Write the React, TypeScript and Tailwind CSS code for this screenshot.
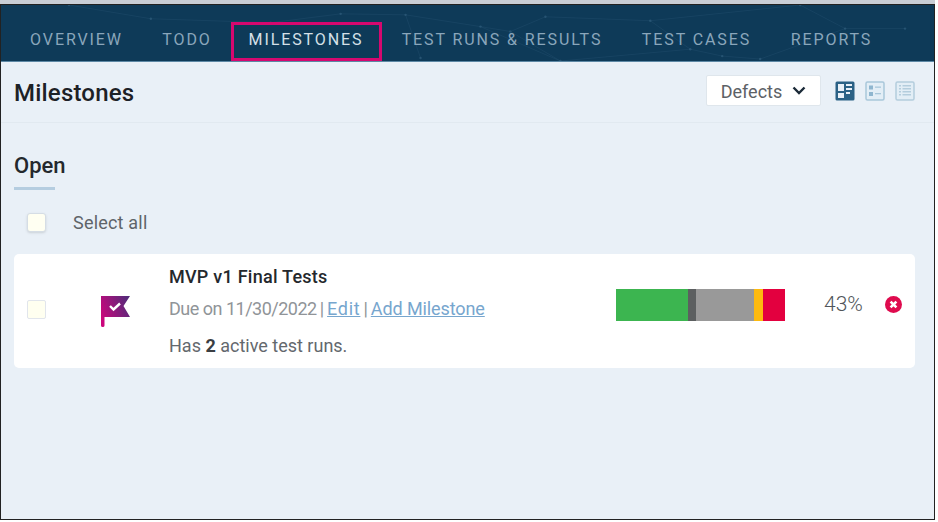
const tabs = [
  { label: "OVERVIEW", w: "w-[133px]", cls: "text-[#8aa6bb] border-transparent" },
  { label: "TODO", w: "w-[88px]", cls: "text-[#8aa6bb] tracking-[1.4px] border-transparent" },
  { label: "MILESTONES", w: "w-[151px]", cls: "text-[#d5e0e8] tracking-[1.7px] border-[#d6086f] pr-[1px]" },
  { label: "TEST RUNS & RESULTS", w: "w-[240px]", cls: "text-[#8aa6bb] border-transparent" },
  { label: "TEST CASES", w: "w-[149px]", cls: "text-[#8aa6bb] border-transparent" },
  { label: "REPORTS", w: "w-[121px]", cls: "text-[#8aa6bb] border-transparent" },
];

function Net() {
  const pts: [number, number][] = [
    [68, 0], [150, 14], [270, 18], [340, 9], [405, 10], [480, 22], [510, 27], [545, 12], [650, 16], [690, 45], [722, 52], [760, 55], [845, 24], [905, 24], [800, 0], [560, 57], [420, 54],
  ];
  const links = [[0, 1], [1, 2], [2, 3], [3, 4], [4, 5], [5, 6], [6, 7], [7, 8], [8, 9], [9, 10], [10, 11], [11, 12], [12, 13], [8, 14], [5, 15], [4, 16], [6, 15], [9, 15], [12, 14]];
  return (
    <svg className="absolute inset-0 w-full h-full" viewBox="0 0 934 57" preserveAspectRatio="none">
      {links.map(([a, b], i) => (
        <line key={i} x1={pts[a][0]} y1={pts[a][1]} x2={pts[b][0]} y2={pts[b][1]} stroke="#2a5676" strokeWidth="0.6" opacity="0.55" />
      ))}
      {pts.map(([x, y], i) => (
        <circle key={i} cx={x} cy={y} r="1.2" fill="#2f5c7c" opacity="0.7" />
      ))}
    </svg>
  );
}

function ViewIcon({ kind }: { kind: 0 | 1 | 2 }) {
  if (kind === 0)
    return (
      <svg width="20" height="20" viewBox="0 0 20 20">
        <rect x="0.5" y="0.5" width="19" height="19" rx="1.5" fill="#2b6185" />
        <rect x="3" y="3" width="6" height="7" fill="#e9f0f7" />
        <rect x="3" y="12" width="6" height="5" fill="#e9f0f7" />
        <rect x="11" y="3" width="6" height="2" fill="#e9f0f7" />
        <rect x="11" y="7" width="6" height="2" fill="#e9f0f7" />
        <rect x="11" y="11" width="4" height="2" fill="#e9f0f7" />
      </svg>
    );
  if (kind === 1)
    return (
      <svg width="20" height="20" viewBox="0 0 20 20">
        <rect x="1" y="1" width="18" height="18" rx="1.5" fill="#e3eef6" stroke="#a9c7da" strokeWidth="1.5" />
        <rect x="4" y="4.5" width="4" height="4" fill="#8fb6cf" />
        <rect x="4" y="11" width="4" height="4" fill="#8fb6cf" />
        <rect x="10" y="5.5" width="6" height="1.3" fill="#a9c7da" />
        <rect x="10" y="12" width="6" height="1.3" fill="#a9c7da" />
      </svg>
    );
  return (
    <svg width="20" height="20" viewBox="0 0 20 20">
      <rect x="1" y="1" width="18" height="18" rx="1.5" fill="#e3eef6" stroke="#b4cddd" strokeWidth="1.5" />
      {[4, 7, 10, 13].map((y) => (
        <g key={y}>
          <rect x="4" y={y} width="2" height="1.5" fill="#b4cddd" />
          <rect x="7.5" y={y} width="8.5" height="1.5" fill="#b4cddd" />
        </g>
      ))}
    </svg>
  );
}

export default function App() {
  return (
    <div className="w-[938px] h-[522px] bg-white overflow-hidden font-['Roboto',sans-serif]">
      <div className="w-[935px] h-[520px] border-t-[4px] border-[#c9ced6]">
        <div className="w-full h-full border border-[#222] bg-[#e9f0f7] flex flex-col">
          <nav className="relative h-[57px] shrink-0 bg-[#0e3a58] flex items-end pl-[9px] border-b border-[#5d88a5]">
            <Net />
            {tabs.map((t) => (
              <div key={t.label} className={`relative ${t.w} h-[39px] flex items-center justify-center pb-[3px] border-[3px] text-[16px] tracking-[1.9px] ${t.cls}`}>
                {t.label}
              </div>
            ))}
          </nav>
          <header className="h-[61px] shrink-0 flex items-center justify-between pl-[13px] pr-[19px] border-b border-[#e1e9f0]">
            <h1 className="text-[24px] tracking-[0.2px] font-medium text-[#1d2126] mt-[1px]">Milestones</h1>
            <div className="flex items-center gap-[14px]">
              <button className="w-[115px] h-[31px] mt-[-4px] bg-white border border-[#dfe6ec] rounded-[2px] flex items-center justify-center gap-[10px] text-[18px] text-[#5c6166]">
                <span className="mt-[2px]">Defects</span>
                <svg width="14" height="9" viewBox="0 0 14 9" fill="none"><path d="M1.5 1.5 7 7l5.5-5.5" stroke="#1b2a38" strokeWidth="2.4" /></svg>
              </button>
              <div className="flex gap-[10px] mt-[-2px]">
                <ViewIcon kind={0} />
                <ViewIcon kind={1} />
                <ViewIcon kind={2} />
              </div>
            </div>
          </header>
          <main className="flex-1 px-[13px] pt-[30px]">
            <h2 className="text-[22px] leading-[26px] font-medium text-[#24282d]">Open</h2>
            <div className="w-[41px] h-[3px] bg-[#b5cde0] mt-[8px]"></div>
            <div className="flex items-center mt-[20px] h-[24px] pl-[13px]">
              <span className="w-[19px] h-[19px] rounded-[3px] bg-[#fffff2] border border-[#d5dde5] shadow-sm"></span>
              <span className="ml-[27px] text-[18px] tracking-[0.2px] text-[#5e6469]">Select all</span>
            </div>
            <section className="mt-[20px] w-[901px] h-[114px] bg-white rounded-[5px] flex items-center pl-[13px]">
              <span className="w-[19px] h-[19px] rounded-[2px] bg-[#fffff0] border-[1.5px] border-[#e1e5ec] mt-[-4px]"></span>
              <svg className="ml-[55px] mt-[0px]" width="29" height="31" viewBox="0 0 29 31">
                <defs>
                  <linearGradient id="flag" x1="0" y1="0.7" x2="1" y2="0.3">
                    <stop offset="0" stopColor="#cc067c" />
                    <stop offset="1" stopColor="#562a7a" />
                  </linearGradient>
                </defs>
                <path d="M0 0h29l-6.5 10L29 21H3.5v8.5a1.75 1.5 0 0 1-3.5 0Z" fill="url(#flag)" />
                <path d="M9 10l3.5 3.5 6.5-6" fill="none" stroke="#fff" strokeWidth="2.4" />
              </svg>
              <div className="ml-[39px] w-[447px]">
                <div className="text-[18px] leading-[24px] tracking-[0.25px] font-medium text-[#24282d]">MVP v1 Final Tests</div>
                <div className="text-[18px] leading-[24px] mt-[8px] text-[#909498] flex">
                  <span className="tracking-[-0.5px]">Due on 11/30/2022</span>
                  <span className="ml-[3px]">|</span>
                  <a className="ml-[3px] underline text-[#77a6ce] tracking-[0.7px]">Edit</a>
                  <span className="ml-[3px]">|</span>
                  <a className="ml-[3px] underline text-[#77a6ce] tracking-[-0.1px]">Add Milestone</a>
                </div>
                <div className="text-[18px] leading-[24px] mt-[13px] text-[#63686d]">
                  Has <b className="text-[#3a3e42]">2</b> active test runs.
                </div>
              </div>
              <div className="flex h-[32px] w-[169px] mt-[-13px]">
                <div className="w-[72px] bg-[#3cb550]"></div>
                <div className="w-[8px] bg-[#5c5f60]"></div>
                <div className="w-[58px] bg-[#999999]"></div>
                <div className="w-[9px] bg-[#fdba0f]"></div>
                <div className="w-[22px] bg-[#e3003f]"></div>
              </div>
              <div className="w-[40px] ml-[39px] text-[21px] font-light text-[#50555a] mt-[-13px]">43%</div>
              <svg className="ml-[21px] mt-[-13px]" width="17" height="17" viewBox="0 0 17 17">
                <circle cx="8.5" cy="8.5" r="8.5" fill="#df0b4e" />
                <path d="M5.6 5.6l5.8 5.8M11.4 5.6l-5.8 5.8" stroke="#fff" strokeWidth="2.6" />
              </svg>
            </section>
          </main>
        </div>
      </div>
    </div>
  );
}
